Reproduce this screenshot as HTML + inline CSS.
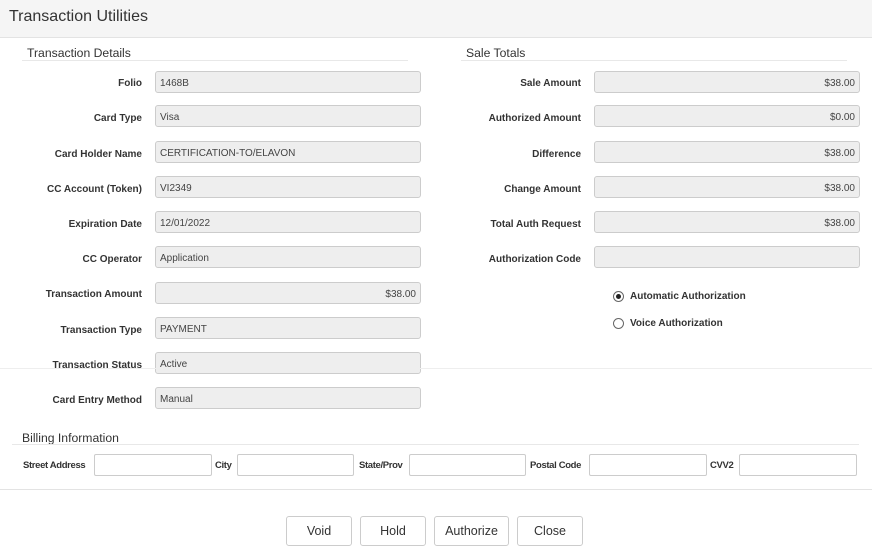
<!DOCTYPE html>
<html><head><style>
body{margin:0;width:872px;height:559px;background:#fff;font-family:"Liberation Sans",Arial,sans-serif;position:relative;overflow:hidden;color:#333}
.hdr{position:absolute;left:0;top:0;width:872px;height:37px;background:#f5f5f5;border-bottom:1px solid #e3e3e3}
.hdr span{position:absolute;left:9px;top:8px;font-size:16px;color:#333}
.h{position:absolute;font-size:12.2px;color:#333}
.ln{position:absolute;height:1px;background:#e8e8e8}
.lb{position:absolute;font-size:10px;font-weight:bold;color:#333;text-align:right;width:200px;margin-top:1px}
.in{position:absolute;border:1px solid #ccc;border-radius:3px;background:#eee;font-size:10px;line-height:20px;padding:2px 4px 0;box-sizing:border-box;height:22px;color:#444}
.r{text-align:right}
.bi{position:absolute;height:22px;border:1px solid #ccc;border-radius:2px;background:#fff;box-sizing:border-box;top:454px}
.bl{position:absolute;top:460px;font-size:9.5px;font-weight:bold;letter-spacing:-0.35px}
.btn{position:absolute;top:516px;height:30px;border:1px solid #ccc;border-radius:3px;background:#fff;font-size:12.5px;text-align:center;line-height:28px;box-sizing:border-box}
.rad{position:absolute;width:11px;height:11px;border:1px solid #666;border-radius:50%;box-sizing:border-box;left:613px}
.rl{position:absolute;left:630px;font-size:10px;font-weight:bold}
</style></head><body>
<div class="hdr"><span>Transaction Utilities</span></div>
<div class="h" style="left:27px;top:46px">Transaction Details</div>
<div class="ln" style="left:22px;top:60px;width:386px"></div>
<div class="h" style="left:466px;top:46px">Sale Totals</div>
<div class="ln" style="left:461px;top:60px;width:386px"></div>

<div class="lb" style="left:-58px;top:77px">Folio</div><div class="in" style="left:155px;top:71px;width:266px">1468B</div>
<div class="lb" style="left:-58px;top:112px">Card Type</div><div class="in" style="left:155px;top:105px;width:266px">Visa</div>
<div class="lb" style="left:-58px;top:148px">Card Holder Name</div><div class="in" style="left:155px;top:141px;width:266px">CERTIFICATION-TO/ELAVON</div>
<div class="lb" style="left:-58px;top:183px">CC Account (Token)</div><div class="in" style="left:155px;top:176px;width:266px">VI2349</div>
<div class="lb" style="left:-58px;top:218px">Expiration Date</div><div class="in" style="left:155px;top:211px;width:266px">12/01/2022</div>
<div class="lb" style="left:-58px;top:253px">CC Operator</div><div class="in" style="left:155px;top:246px;width:266px">Application</div>
<div class="lb" style="left:-58px;top:288px">Transaction Amount</div><div class="in r" style="left:155px;top:282px;width:266px">$38.00</div>
<div class="lb" style="left:-58px;top:324px">Transaction Type</div><div class="in" style="left:155px;top:317px;width:266px">PAYMENT</div>
<div class="lb" style="left:-58px;top:359px">Transaction Status</div><div class="in" style="left:155px;top:352px;width:266px">Active</div>
<div class="lb" style="left:-58px;top:394px">Card Entry Method</div><div class="in" style="left:155px;top:387px;width:266px">Manual</div>

<div class="lb" style="left:381px;top:77px">Sale Amount</div><div class="in r" style="left:594px;top:71px;width:266px">$38.00</div>
<div class="lb" style="left:381px;top:112px">Authorized Amount</div><div class="in r" style="left:594px;top:105px;width:266px">$0.00</div>
<div class="lb" style="left:381px;top:148px">Difference</div><div class="in r" style="left:594px;top:141px;width:266px">$38.00</div>
<div class="lb" style="left:381px;top:183px">Change Amount</div><div class="in r" style="left:594px;top:176px;width:266px">$38.00</div>
<div class="lb" style="left:381px;top:218px">Total Auth Request</div><div class="in r" style="left:594px;top:211px;width:266px">$38.00</div>
<div class="lb" style="left:381px;top:253px">Authorization Code</div><div class="in" style="left:594px;top:246px;width:266px"></div>

<div class="rad" style="top:291px"><div style="position:absolute;left:2px;top:2px;width:5px;height:5px;border-radius:50%;background:#222"></div></div>
<div class="rl" style="top:291px">Automatic Authorization</div>
<div class="rad" style="top:318px"></div>
<div class="rl" style="top:318px">Voice Authorization</div>

<div class="ln" style="left:0;top:368px;width:872px;background:#eee"></div>

<div class="h" style="left:22px;top:431px">Billing Information</div>
<div class="ln" style="left:12px;top:444px;width:847px"></div>
<div class="bl" style="left:23px">Street Address</div><div class="bi" style="left:94px;width:118px"></div>
<div class="bl" style="left:215px">City</div><div class="bi" style="left:237px;width:117px"></div>
<div class="bl" style="left:359px">State/Prov</div><div class="bi" style="left:409px;width:117px"></div>
<div class="bl" style="left:530px">Postal Code</div><div class="bi" style="left:589px;width:118px"></div>
<div class="bl" style="left:710px">CVV2</div><div class="bi" style="left:739px;width:118px"></div>
<div class="ln" style="left:0;top:489px;width:872px;background:#e3e3e3"></div>

<div class="btn" style="left:286px;width:66px">Void</div>
<div class="btn" style="left:360px;width:66px">Hold</div>
<div class="btn" style="left:434px;width:75px">Authorize</div>
<div class="btn" style="left:517px;width:66px">Close</div>
</body></html>
